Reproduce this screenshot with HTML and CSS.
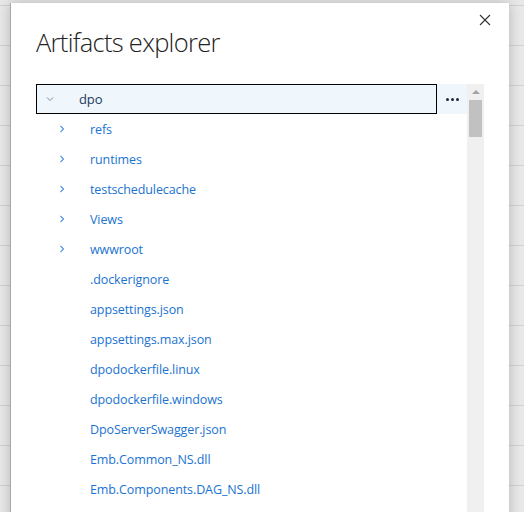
FILE: index.html
```html
<!DOCTYPE html>
<html lang="en">
<head>
    <meta charset="UTF-8">
    <title>Artifacts explorer</title>
    <link rel="stylesheet" href="styles.css">
</head>
<body>
    <div class="dialog">
        <button class="close-btn" aria-label="Close">
            <svg width="12" height="12" viewBox="0 0 12 12"><path d="M1 1 L11 11 M11 1 L1 11" stroke="#333" stroke-width="1.1" fill="none"/></svg>
        </button>
        <h1 class="title">Artifacts explorer</h1>
        <div class="tree-box">
            <div class="tree">
                <div class="row root">
                    <div class="row-main">
                        <span class="chev down">
                            <svg width="8" height="6" viewBox="0 0 8 6"><path d="M1 1.5 L4 4.5 L7 1.5" stroke="#7d8ea3" stroke-width="1" fill="none"/></svg>
                        </span>
                        <span class="name">dpo</span>
                    </div>
                    <div class="more"><span></span><span></span><span></span></div>
                </div>
                <div class="row folder"><span class="chev"><svg width="6" height="8" viewBox="0 0 6 8"><path d="M1.5 1 L4.5 4 L1.5 7" stroke="#4b93de" stroke-width="1.1" fill="none"/></svg></span><span class="name">refs</span></div>
                <div class="row folder"><span class="chev"><svg width="6" height="8" viewBox="0 0 6 8"><path d="M1.5 1 L4.5 4 L1.5 7" stroke="#4b93de" stroke-width="1.1" fill="none"/></svg></span><span class="name">runtimes</span></div>
                <div class="row folder"><span class="chev"><svg width="6" height="8" viewBox="0 0 6 8"><path d="M1.5 1 L4.5 4 L1.5 7" stroke="#4b93de" stroke-width="1.1" fill="none"/></svg></span><span class="name">testschedulecache</span></div>
                <div class="row folder"><span class="chev"><svg width="6" height="8" viewBox="0 0 6 8"><path d="M1.5 1 L4.5 4 L1.5 7" stroke="#4b93de" stroke-width="1.1" fill="none"/></svg></span><span class="name">Views</span></div>
                <div class="row folder"><span class="chev"><svg width="6" height="8" viewBox="0 0 6 8"><path d="M1.5 1 L4.5 4 L1.5 7" stroke="#4b93de" stroke-width="1.1" fill="none"/></svg></span><span class="name">wwwroot</span></div>
                <div class="row file"><span class="name">.dockerignore</span></div>
                <div class="row file"><span class="name">appsettings.json</span></div>
                <div class="row file"><span class="name">appsettings.max.json</span></div>
                <div class="row file"><span class="name">dpodockerfile.linux</span></div>
                <div class="row file"><span class="name">dpodockerfile.windows</span></div>
                <div class="row file"><span class="name">DpoServerSwagger.json</span></div>
                <div class="row file"><span class="name">Emb.Common_NS.dll</span></div>
                <div class="row file"><span class="name">Emb.Components.DAG_NS.dll</span></div>
            </div>
            <div class="scrollbar">
                <div class="arrow-up"></div>
                <div class="thumb"></div>
            </div>
        </div>
    </div>
</body>
</html>
```

FILE: styles.css
```css
html, body {
    height: 100%;
}
body {
    margin: 0;
    overflow: hidden;
    font-family: "Open Sans", "Noto Sans", Arial, sans-serif;
    background-color: #e8e8e8;
    background-image: repeating-linear-gradient(to bottom, transparent 0, transparent 5px, #d2d2d2 5px, #d2d2d2 6px, transparent 6px, transparent 40px);
}
.dialog {
    position: relative;
    margin: 3px 0 0 10px;
    width: 499px;
    height: 520px;
    background: #fff;
    box-sizing: border-box;
    border-left: 1px solid #a8a8a8;
    box-shadow: 0 0 12px rgba(0, 0, 0, 0.22);
    padding: 20px 0 0 25px;
}
.close-btn {
    position: absolute;
    top: 11px;
    right: 18px;
    border: none;
    background: none;
    padding: 0;
    width: 12px;
    height: 12px;
    cursor: pointer;
}
.close-btn svg {
    display: block;
}
.title {
    margin: 0;
    font-weight: 300;
    font-size: 25.5px;
    line-height: 38px;
    color: #222;
    letter-spacing: -0.7px;
}
.tree-box {
    display: flex;
    margin-top: 23px;
    width: 448px;
}
.tree {
    width: 431px;
}
.row {
    display: flex;
    align-items: center;
    height: 30px;
    font-size: 12.5px;
    letter-spacing: -0.1px;
    color: #1a73d1;
}
.root {
    background: #eff6fc;
}
.row-main {
    display: flex;
    align-items: center;
    width: 401px;
    height: 30px;
    box-sizing: border-box;
    border: 1px solid #000;
    padding-left: 8px;
}
.root .name {
    color: #1e3a5c;
    font-size: 13px;
}
.chev {
    display: flex;
    align-items: center;
    justify-content: center;
    width: 10px;
    height: 30px;
}
.chev.down {
    margin-right: 24px;
}
.folder {
    padding-left: 21px;
}
.folder .chev {
    margin-right: 23px;
}
.file {
    padding-left: 54px;
}
.more {
    display: flex;
    align-items: center;
    justify-content: center;
    gap: 2px;
    width: 30px;
    height: 30px;
}
.more span {
    width: 3px;
    height: 3px;
    border-radius: 50%;
    background: #1e2a3a;
}
.scrollbar {
    width: 17px;
    height: 430px;
    background: #f0f0f0;
}
.arrow-up {
    width: 0;
    height: 0;
    margin: 6px auto 0;
    border-left: 4px solid transparent;
    border-right: 4px solid transparent;
    border-bottom: 4px solid #a3a3a3;
}
.thumb {
    width: 13px;
    height: 37px;
    margin: 6px auto 0;
    background: #c1c1c1;
}
```
